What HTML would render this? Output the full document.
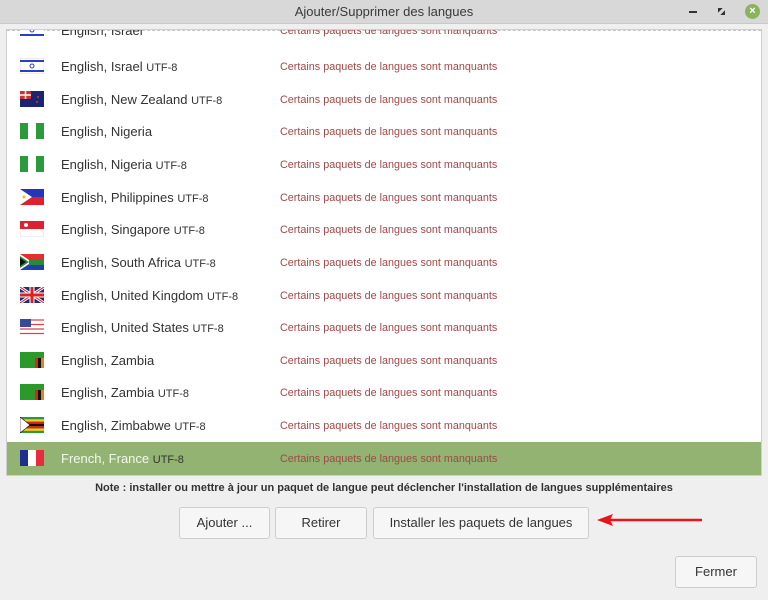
<!DOCTYPE html>
<html><head><meta charset="utf-8"><style>
*{margin:0;padding:0;box-sizing:border-box}
body{width:768px;height:600px;background:#efefef;font-family:"Liberation Sans","DejaVu Sans",sans-serif;position:relative;overflow:hidden;color:#333}
.tb{position:absolute;left:0;top:0;width:768px;height:24px;background:#d8d8d8;border-bottom:1px solid #c8c8c8;text-align:center;font-size:13px;line-height:24px;color:#3a3a3a}
.list{position:absolute;left:6px;top:29px;width:756px;height:447px;background:#fff;border:1px solid #cfcfcf;overflow:hidden}
.dash{position:absolute;left:0;top:0;width:100%;height:2px;border-top:1px dashed #c4c4c4}
.row{position:absolute;left:0;width:754px;height:33px}
.row svg{position:absolute;left:13px;top:8px}
.nm{position:absolute;left:54px;top:9px;font-size:13px;color:#333;white-space:nowrap}
.nm small{font-size:11px}
.st{position:absolute;left:273px;top:11px;font-size:10.8px;color:#a04848;white-space:nowrap}
.sel{background:#92b372}
.sel .nm{color:#f4f7ee}.sel .nm small{color:#333}
.note{position:absolute;left:0;width:768px;top:482px;text-align:center;font-size:11px;font-weight:bold;color:#333}
.btn{position:absolute;height:32px;border:1px solid #cdcdcd;border-radius:3px;background:#f6f6f6;font-size:13px;text-align:center;line-height:30px;color:#333}
</style></head><body>
<div class="tb">Ajouter/Supprimer des langues</div>
<div style="position:absolute;left:689px;top:11px;width:8px;height:2px;background:#333"></div>
<div style="position:absolute;left:718px;top:8px;width:7px;height:7px;background:linear-gradient(135deg,#333 35%,transparent 35%,transparent 65%,#333 65%)"></div>
<div style="position:absolute;left:745px;top:4px;width:15px;height:15px;border-radius:50%;background:#8ab35e;color:#fff;font-size:11px;line-height:15px;text-align:center;font-weight:bold">×</div>
<div class="list">
<div class="dash"></div>
<div class="row" style="top:-16px"><svg width="24" height="16"><rect width="24" height="16" fill="#fff"/><rect y="2" width="24" height="2" fill="#2a3ec8"/><rect y="12" width="24" height="2" fill="#2a3ec8"/><circle cx="12" cy="8" r="2" fill="none" stroke="#2a3ec8"/></svg><div class="nm">English, Israel</div><div class="st">Certains paquets de langues sont manquants</div></div>
<div class="row" style="top:20px"><svg width="24" height="16"><rect width="24" height="16" fill="#fff" stroke="#ddd"/><rect y="2" width="24" height="2" fill="#2a3ec8"/><rect y="12" width="24" height="2" fill="#2a3ec8"/><circle cx="12" cy="8" r="2" fill="none" stroke="#2a3ec8"/></svg><div class="nm">English, Israel <small>UTF-8</small></div><div class="st">Certains paquets de langues sont manquants</div></div>
<div class="row" style="top:53px"><svg width="24" height="16"><rect width="24" height="16" fill="#1a2470"/><rect width="11" height="8" fill="#c33"/><path d="M0 4h11M5.5 0v8" stroke="#fff" stroke-width="1.5"/><circle cx="18" cy="6" r="1" fill="#d33"/><circle cx="17" cy="11" r="1" fill="#d33"/></svg><div class="nm">English, New Zealand <small>UTF-8</small></div><div class="st">Certains paquets de langues sont manquants</div></div>
<div class="row" style="top:85px"><svg width="24" height="16"><rect width="24" height="16" fill="#fff"/><rect width="8" height="16" fill="#2a9a3a"/><rect x="16" width="8" height="16" fill="#2a9a3a"/></svg><div class="nm">English, Nigeria</div><div class="st">Certains paquets de langues sont manquants</div></div>
<div class="row" style="top:118px"><svg width="24" height="16"><rect width="24" height="16" fill="#fff"/><rect width="8" height="16" fill="#2a9a3a"/><rect x="16" width="8" height="16" fill="#2a9a3a"/></svg><div class="nm">English, Nigeria <small>UTF-8</small></div><div class="st">Certains paquets de langues sont manquants</div></div>
<div class="row" style="top:151px"><svg width="24" height="16"><rect width="24" height="8" fill="#2437b8"/><rect y="8" width="24" height="8" fill="#e02030"/><path d="M0 0L12 8L0 16Z" fill="#fff"/><circle cx="4" cy="8" r="1.5" fill="#e8c020"/></svg><div class="nm">English, Philippines <small>UTF-8</small></div><div class="st">Certains paquets de langues sont manquants</div></div>
<div class="row" style="top:183px"><svg width="24" height="16"><rect width="24" height="16" fill="#fff" stroke="#ddd"/><rect width="24" height="8" fill="#e02030"/><circle cx="6" cy="4" r="2" fill="#fff"/></svg><div class="nm">English, Singapore <small>UTF-8</small></div><div class="st">Certains paquets de langues sont manquants</div></div>
<div class="row" style="top:216px"><svg width="24" height="16"><rect width="24" height="8" fill="#e03030"/><rect y="8" width="24" height="8" fill="#2040b0"/><path d="M0 0L12 8L0 16" fill="#fff"/><path d="M0 2L9 8L0 14Z" fill="#2a8a3a"/><path d="M9 5h15v6H9Z" fill="#2a8a3a"/><path d="M0 4L6 8L0 12Z" fill="#111"/></svg><div class="nm">English, South Africa <small>UTF-8</small></div><div class="st">Certains paquets de langues sont manquants</div></div>
<div class="row" style="top:249px"><svg width="24" height="16"><rect width="24" height="16" fill="#1e2c80"/><path d="M0 0L24 16M24 0L0 16" stroke="#fff" stroke-width="3"/><path d="M0 0L24 16M24 0L0 16" stroke="#d22" stroke-width="1"/><path d="M12 0v16M0 8h24" stroke="#fff" stroke-width="5"/><path d="M12 0v16M0 8h24" stroke="#d22" stroke-width="3"/></svg><div class="nm">English, United Kingdom <small>UTF-8</small></div><div class="st">Certains paquets de langues sont manquants</div></div>
<div class="row" style="top:281px"><svg width="24" height="16"><rect width="24" height="16" fill="#fff"/><path d="M0 1h24M0 5.5h24M0 10h24M0 14.5h24" stroke="#d44" stroke-width="1.3"/><rect width="11" height="8" fill="#3a4a9a"/></svg><div class="nm">English, United States <small>UTF-8</small></div><div class="st">Certains paquets de langues sont manquants</div></div>
<div class="row" style="top:314px"><svg width="24" height="16"><rect width="24" height="16" fill="#2a9a2a"/><rect x="15" y="6" width="3" height="10" fill="#d22"/><rect x="18" y="6" width="3" height="10" fill="#111"/><rect x="21" y="6" width="3" height="10" fill="#e88020"/></svg><div class="nm">English, Zambia</div><div class="st">Certains paquets de langues sont manquants</div></div>
<div class="row" style="top:346px"><svg width="24" height="16"><rect width="24" height="16" fill="#2a9a2a"/><rect x="15" y="6" width="3" height="10" fill="#d22"/><rect x="18" y="6" width="3" height="10" fill="#111"/><rect x="21" y="6" width="3" height="10" fill="#e88020"/></svg><div class="nm">English, Zambia <small>UTF-8</small></div><div class="st">Certains paquets de langues sont manquants</div></div>
<div class="row" style="top:379px"><svg width="24" height="16"><rect width="24" height="16" fill="#2a9a3a"/><rect y="2.3" width="24" height="2.3" fill="#f0d020"/><rect y="4.6" width="24" height="2.3" fill="#d22"/><rect y="6.9" width="24" height="2.3" fill="#111"/><rect y="9.2" width="24" height="2.3" fill="#d22"/><rect y="11.5" width="24" height="2.3" fill="#f0d020"/><path d="M0 0L10 8L0 16Z" fill="#fff" stroke="#111" stroke-width=".6"/></svg><div class="nm">English, Zimbabwe <small>UTF-8</small></div><div class="st">Certains paquets de langues sont manquants</div></div>
<div class="row sel" style="top:412px"><svg width="24" height="16"><rect width="8" height="16" fill="#1e2f8e"/><rect x="8" width="8" height="16" fill="#fff"/><rect x="16" width="8" height="16" fill="#e82a3a"/></svg><div class="nm">French, France <small>UTF-8</small></div><div class="st">Certains paquets de langues sont manquants</div></div>
</div>
<div class="note">Note : installer ou mettre à jour un paquet de langue peut déclencher l'installation de langues supplémentaires</div>
<div class="btn" style="left:179px;top:507px;width:91px">Ajouter ...</div>
<div class="btn" style="left:275px;top:507px;width:92px">Retirer</div>
<div class="btn" style="left:373px;top:507px;width:216px">Installer les paquets de langues</div>
<div class="btn" style="left:675px;top:556px;width:82px">Fermer</div>
<svg style="position:absolute;left:596px;top:513px" width="110" height="14"><path d="M12 7H106" stroke="#e8141a" stroke-width="2.5"/><path d="M1 7L17 1L14 7L17 13Z" fill="#e8141a"/></svg>
</body></html>
